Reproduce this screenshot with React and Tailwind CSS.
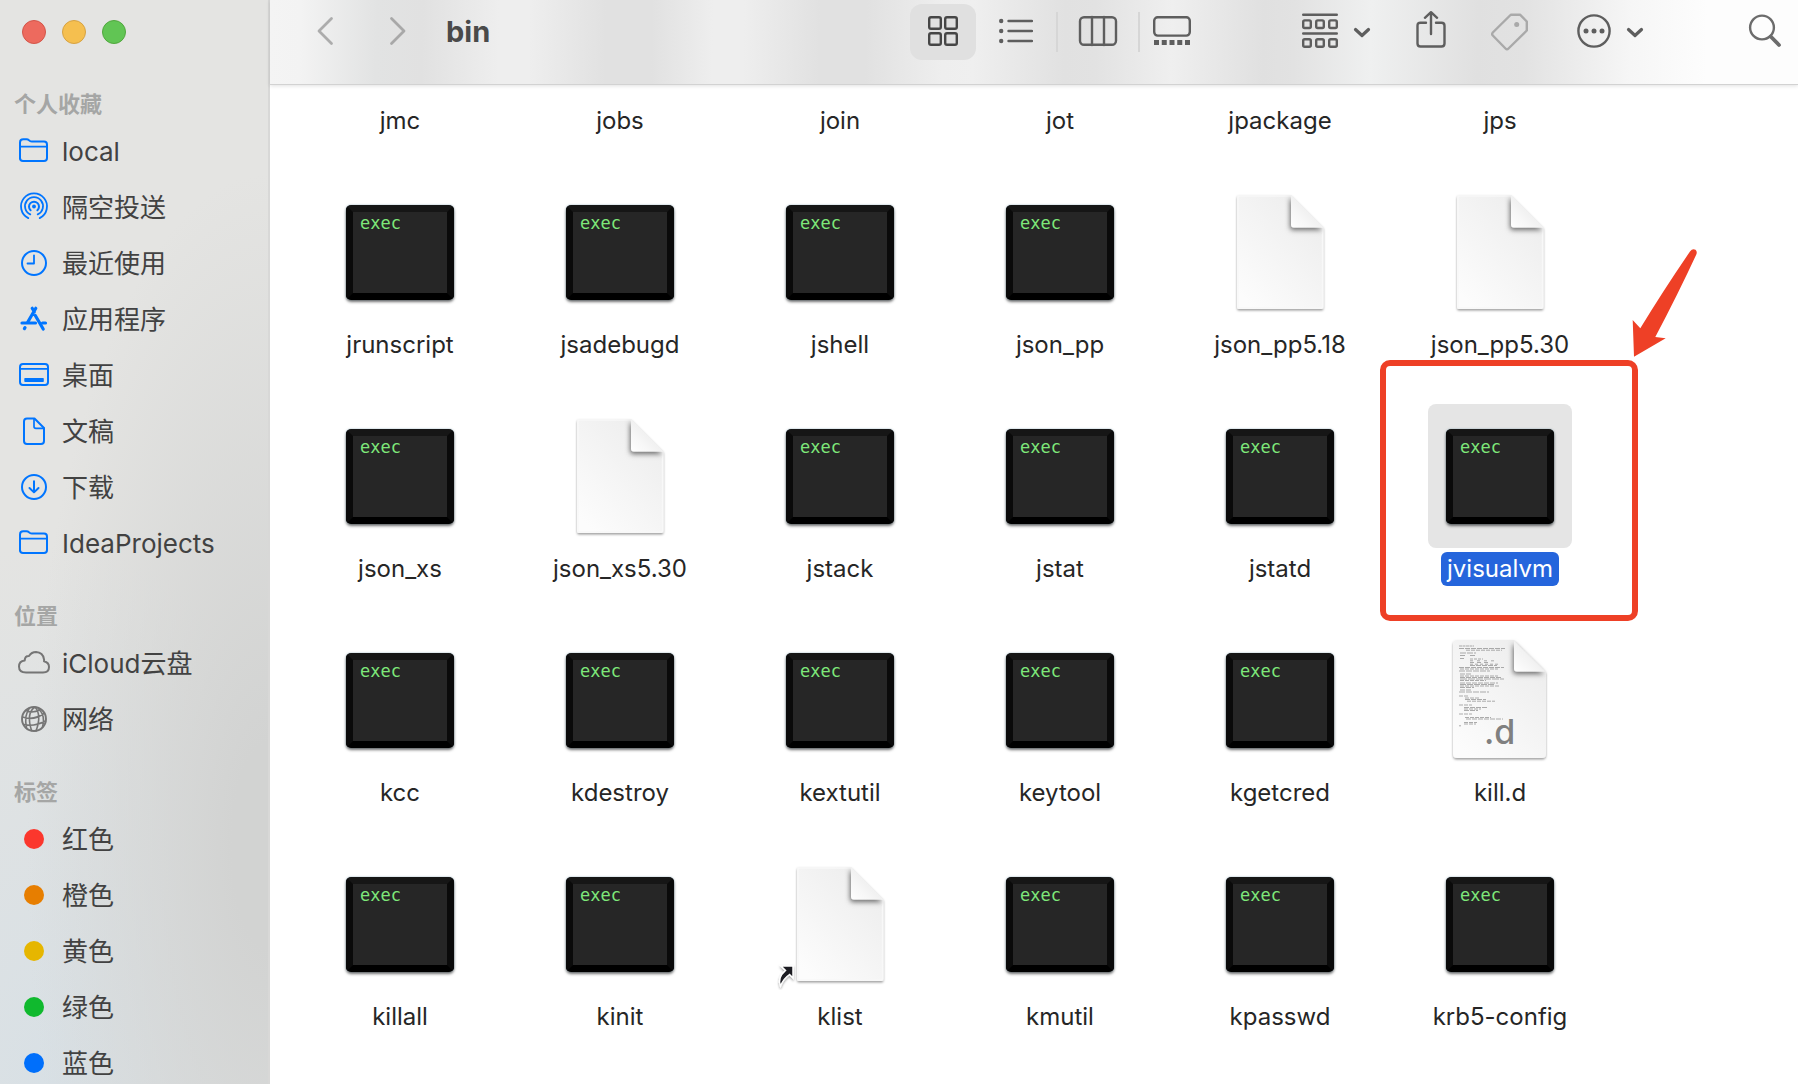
import React, { useState } from "react";

const favorites = [
  { name: "local", icon: "folder" },
  { name: "隔空投送", icon: "airdrop" },
  { name: "最近使用", icon: "clock" },
  { name: "应用程序", icon: "apps" },
  { name: "桌面", icon: "desktop" },
  { name: "文稿", icon: "doc" },
  { name: "下载", icon: "download" },
  { name: "IdeaProjects", icon: "folder" },
];

const locations = [
  { name: "iCloud云盘", icon: "cloud" },
  { name: "网络", icon: "globe" },
];

const tags = [
  { name: "红色", color: "bg-[#fb372d]" },
  { name: "橙色", color: "bg-[#e77e00]" },
  { name: "黄色", color: "bg-[#e6b600]" },
  { name: "绿色", color: "bg-[#10b92e]" },
  { name: "蓝色", color: "bg-[#006ffb]" },
];

// the first row is scrolled under the toolbar, only its names show
const scrolledRow = ["jmc", "jobs", "join", "jot", "jpackage", "jps"];

const files = [
  { name: "jrunscript", kind: "exec" },
  { name: "jsadebugd", kind: "exec" },
  { name: "jshell", kind: "exec" },
  { name: "json_pp", kind: "exec" },
  { name: "json_pp5.18", kind: "blank" },
  { name: "json_pp5.30", kind: "blank" },
  { name: "json_xs", kind: "exec" },
  { name: "json_xs5.30", kind: "blank" },
  { name: "jstack", kind: "exec" },
  { name: "jstat", kind: "exec" },
  { name: "jstatd", kind: "exec" },
  { name: "jvisualvm", kind: "exec", marked: true },
  { name: "kcc", kind: "exec" },
  { name: "kdestroy", kind: "exec" },
  { name: "kextutil", kind: "exec" },
  { name: "keytool", kind: "exec" },
  { name: "kgetcred", kind: "exec" },
  { name: "kill.d", kind: "source" },
  { name: "killall", kind: "exec" },
  { name: "kinit", kind: "exec" },
  { name: "klist", kind: "alias" },
  { name: "kmutil", kind: "exec" },
  { name: "kpasswd", kind: "exec" },
  { name: "krb5-config", kind: "exec" },
];

const sideIcons = {
  folder: (
    <>
      <path d="M4 26V9.500Q4 6.300 7.300 6.300H10.500Q12 6.300 13 7.200L14 8Q14.800 8.600 16 8.600H28Q31 8.600 31 11.800V25Q31 28 28 28H7Q4 28 4 25Z" />
      <path d="M4 13.600H31" strokeWidth="1.700" />
    </>
  ),
  airdrop: (
    <>
      <circle cx="18" cy="17.500" r="1.900" fill="currentColor" stroke="none" />
      <path d="M14.600 21.300A5 5 0 1 1 21.400 21.300" />
      <path d="M14.300 25.400A9 9 0 1 1 21.700 25.400" strokeWidth="1.800" />
      <path d="M12.300 29.100A13 13 0 1 1 23.700 29.100" strokeWidth="1.800" />
    </>
  ),
  clock: (
    <>
      <circle cx="18" cy="18" r="12" />
      <path d="M18 10.300V18.500H11.500" strokeWidth="1.800" />
    </>
  ),
  apps: (
    <g strokeWidth="3.200">
      <path d="M6 22H19.500M26.500 22H29.500" />
      <path d="M19.800 7.300L11.800 21M16.200 7.300L18.300 10.800M19.300 14.500L27.200 28" />
      <path d="M9 26.600L8.400 27.600" />
    </g>
  ),
  desktop: (
    <>
      <rect x="4" y="7" width="28" height="21" rx="3" />
      <path d="M4 11.800H32" strokeWidth="1.700" />
      <rect x="8.300" y="21" width="19.500" height="4" rx="0.700" fill="currentColor" stroke="none" />
    </>
  ),
  doc: (
    <>
      <path d="M18.500 5.500H11Q8 5.500 8 8.500V28Q8 31 11 31H25Q28 31 28 28V15Z" />
      <path d="M18 6V13.500Q18 15.300 20 15.300H28" strokeWidth="1.700" />
    </>
  ),
  download: (
    <>
      <circle cx="18" cy="18" r="12" />
      <path d="M18 12.300V23.200M13.500 19L18 23.400L22.500 19" />
    </>
  ),
  cloud: (
    <path d="M10 27.500Q3 27.500 3 21.500Q3 16 8.700 15.400Q9 10.800 13 11Q15.500 7 20 7Q27 7.300 28 14.300Q28.300 15.300 28 16.300Q33 17.500 33 22Q33 27.500 27 27.500Z" />
  ),
  globe: (
    <g strokeWidth="1.600">
      <circle cx="18" cy="18" r="12" strokeWidth="1.900" />
      <path d="M19 6Q10 12 15.500 29.500M19 6Q26 14 20 30M6.500 16Q18 20 28.500 12M8 23.500Q18 26 29.500 20M10 9.500Q16 13 24.500 8.500M13.500 7Q8 14 10.500 26.500M22 7Q30 15 26.500 26" />
    </g>
  ),
};

const SideIcon = ({ name }) => {
  const gray = name === "cloud" || name === "globe";
  return (
    <svg
      viewBox="0 0 36 36"
      className={gray ? "h-9 w-9 text-[#757575]" : "h-9 w-9 text-[#0075ff]"}
      fill="none"
      stroke="currentColor"
      strokeWidth="2"
      strokeLinecap="round"
      strokeLinejoin="round"
      aria-hidden="true"
    >
      {sideIcons[name]}
    </svg>
  );
};

const Section = ({ title, className, children }) => (
  <section className={className}>
    <h2 className="flex h-[38px] items-center px-3.5 text-[22px] font-bold text-[#a5a6a5]">
      {title}
    </h2>
    <ul>{children}</ul>
  </section>
);

const SideItem = ({ name, children }) => (
  <li>
    <a href="#" className="flex h-14 items-center gap-2.5 pl-4 text-[26px] text-[#424242]">
      <span className="flex h-9 w-9 items-center justify-center">{children}</span>
      {name}
    </a>
  </li>
);

const Sidebar = () => (
  <nav className="w-[270px] shrink-0 overflow-hidden border-r-2 border-[#d8d8d7] bg-[#e4e4e2] bg-[radial-gradient(ellipse_90%_62%_at_100%_78%,#d2d3d2_15%,transparent),radial-gradient(ellipse_120%_50%_at_20%_100%,#d8e0e5,transparent)]">
    <div className="flex h-[85px] gap-4 pt-5 pl-[22px]">
      <button aria-label="关闭" className="h-6 w-6 rounded-full border border-[#d35549] bg-[#ed6a5e]" />
      <button aria-label="最小化" className="h-6 w-6 rounded-full border border-[#d6a243] bg-[#f5bf4f]" />
      <button aria-label="缩放" className="h-6 w-6 rounded-full border border-[#51a73e] bg-[#61c554]" />
    </div>
    <Section title="个人收藏">
      {favorites.map((f) => (
        <SideItem key={f.name} name={f.name}>
          <SideIcon name={f.icon} />
        </SideItem>
      ))}
    </Section>
    <Section title="位置" className="mt-[26px]">
      {locations.map((l) => (
        <SideItem key={l.name} name={l.name}>
          <SideIcon name={l.icon} />
        </SideItem>
      ))}
    </Section>
    <Section title="标签" className="mt-[26px]">
      {tags.map((t) => (
        <SideItem key={t.name} name={t.name}>
          <span className={`h-5 w-5 rounded-full ${t.color}`} />
        </SideItem>
      ))}
    </Section>
  </nav>
);

const ToolIcon = ({ box, className, children }) => (
  <svg
    viewBox={box}
    className={className}
    fill="none"
    stroke="currentColor"
    strokeWidth="2.400"
    strokeLinecap="round"
    strokeLinejoin="round"
    aria-hidden="true"
  >
    {children}
  </svg>
);

const Chevron = () => (
  <ToolIcon box="0 0 18 56" className="h-14 w-[18px]">
    <path d="M2.500 25.500L9 31.500L15.500 25.500" strokeWidth="3.200" />
  </ToolIcon>
);

const Toolbar = () => (
  <header className="relative flex h-[85px] shrink-0 items-start border-b border-[#d2d2d2] bg-[linear-gradient(91deg,#f4f4f4_0%,#f3f3f3_2%,#e2e3e3_7%,#e1e1e1_10%,#eeeeee_15%,#eeeeee_17%,#e1e1e1_22%,#e1e1e1_25%,#eeeeee_29%,#eeeeee_31%,#e1e1e1_36%,#e1e1e1_39%,#eeeeee_44%,#efefef_46%,#e1e1e1_52%,#e2e2e2_54%,#efefef_59%,#e0e0e0_65%,#e2e2e2_67%,#eff0f0_72%,#e0e0e0_79%,#e2e2e2_82%,#f6f6f6_89%,#fdfdfd_94%)] pt-1 pr-4 pl-[45px] text-[#5e5e5e] shadow-[0_1px_4px_rgba(0,0,0,0.12)]">
    <button aria-label="后退" className="h-14 w-5 text-[#acacac]">
      <ToolIcon box="0 0 20 56" className="h-14 w-5">
        <path d="M16.500 14.500L4 27L16.500 39.500" strokeWidth="2.800" />
      </ToolIcon>
    </button>
    <button aria-label="前进" className="ml-[53px] h-14 w-5 text-[#a8a8a8]">
      <ToolIcon box="0 0 20 56" className="h-14 w-5">
        <path d="M3.500 14.500L16 27L3.500 39.500" strokeWidth="2.800" />
      </ToolIcon>
    </button>
    <h1 className="ml-[38px] flex h-14 items-center text-[29px] font-bold text-[#4a4a4a]">bin</h1>

    <div className="ml-auto flex items-center gap-[7px]">
      <button aria-label="图标" className="flex h-14 w-[66px] justify-center rounded-xl bg-[#e0e0e0] text-[#464646]">
        <ToolIcon box="0 0 34 56" className="h-14 w-[34px]">
          <rect x="3.200" y="13.200" width="11.600" height="11.600" rx="1.800" />
          <rect x="19.200" y="13.200" width="11.600" height="11.600" rx="1.800" />
          <rect x="3.200" y="29.200" width="11.600" height="11.600" rx="1.800" />
          <rect x="19.200" y="29.200" width="11.600" height="11.600" rx="1.800" />
        </ToolIcon>
      </button>
      <button aria-label="列表" className="flex h-14 w-[66px] justify-center">
        <ToolIcon box="0 0 34 56" className="h-14 w-[34px]">
          <path d="M9.500 17H33M9.500 27H33M9.500 37H33" />
          <g fill="currentColor" stroke="none">
            <circle cx="2.200" cy="17" r="2.200" />
            <circle cx="2.200" cy="27" r="2.200" />
            <circle cx="2.200" cy="37" r="2.200" />
          </g>
        </ToolIcon>
      </button>
      <span className="h-10 w-0.5 bg-[#d6d6d6]" />
      <button aria-label="分栏" className="flex h-14 w-[66px] justify-center">
        <ToolIcon box="0 0 40 56" className="h-14 w-10">
          <rect x="2" y="13.200" width="36" height="27.600" rx="4" />
          <path d="M14 13V41M26 13V41" />
        </ToolIcon>
      </button>
      <span className="h-10 w-0.5 bg-[#d6d6d6]" />
      <button aria-label="画廊" className="flex h-14 w-[50px] justify-center">
        <ToolIcon box="0 0 40 56" className="h-14 w-10">
          <rect x="2.200" y="13.200" width="35.600" height="18.400" rx="3.500" />
          <path d="M2 38.500H38" strokeWidth="5" strokeLinecap="butt" strokeDasharray="5 2.750" />
        </ToolIcon>
      </button>
    </div>

    <button aria-label="分组" className="ml-[104px] flex h-14 gap-3.5">
      <ToolIcon box="0 0 38 56" className="h-14 w-[38px]">
        <path d="M2.200 10.700H35.800M2.200 29.500H35.800" />
        <rect x="2.200" y="16.400" width="7.600" height="7.600" rx="1.500" />
        <rect x="15.200" y="16.400" width="7.600" height="7.600" rx="1.500" />
        <rect x="28.200" y="16.400" width="7.600" height="7.600" rx="1.500" />
        <rect x="2.200" y="35.200" width="7.600" height="7.600" rx="1.500" />
        <rect x="15.200" y="35.200" width="7.600" height="7.600" rx="1.500" />
        <rect x="28.200" y="35.200" width="7.600" height="7.600" rx="1.500" />
      </ToolIcon>
      <Chevron />
    </button>
    <button aria-label="共享" className="ml-11 h-14">
      <ToolIcon box="0 0 32 56" className="h-14 w-8">
        <path d="M11 18.700H5.500Q2.500 18.700 2.500 21.700V39.500Q2.500 42.500 5.500 42.500H26.500Q29.500 42.500 29.500 39.500V21.700Q29.500 18.700 26.500 18.700H21" />
        <path d="M16 30V8.500M9.900 13.800L16 8.200L22.100 13.800" />
      </ToolIcon>
    </button>
    <button aria-label="标签" className="ml-[43px] h-14 text-[#a9a9a9]">
      <ToolIcon box="0 0 40 56" className="h-14 w-10">
        <path d="M21.500 10.700H30L36.800 17.500V26.500L18.500 44.500Q17 46 15.500 44.500L2.800 31.500Q1.500 30 2.800 28.500L20 11.500Q20.700 10.700 21.500 10.700Z" />
        <circle cx="26.700" cy="20.500" r="2.500" fill="currentColor" stroke="none" />
      </ToolIcon>
    </button>
    <button aria-label="操作" className="ml-[46px] flex h-14 gap-3.5">
      <ToolIcon box="0 0 36 56" className="h-14 w-9">
        <circle cx="18" cy="27" r="15.600" />
        <g fill="currentColor" stroke="none">
          <circle cx="10" cy="27" r="2.500" />
          <circle cx="18" cy="27" r="2.500" />
          <circle cx="26" cy="27" r="2.500" />
        </g>
      </ToolIcon>
      <Chevron />
    </button>
    <button aria-label="搜索" className="ml-[104px] h-14 text-[#6c6c6c]">
      <ToolIcon box="0 0 34 56" className="h-14 w-[34px]">
        <circle cx="14" cy="23.500" r="11.900" />
        <path d="M22.700 32.500L31 41" strokeWidth="3.800" />
      </ToolIcon>
    </button>
  </header>
);

const ExecIcon = () => (
  <div className="h-[95px] w-[108px] rounded-[5px] border-[7px] border-x-[#0a0a0a] border-t-[#161616] border-b-black bg-[#262626] px-[7px] text-left font-['DejaVu_Sans_Mono',monospace] text-[17px] leading-[22px] text-[#7ee87a] shadow-[0_2px_3px_rgba(0,0,0,0.55),0_0_2px_rgba(100,150,170,0.6)]">
    exec
  </div>
);

const DocIcon = ({ alias }) => (
  <svg viewBox="0 0 144 144" className="h-36 w-36" aria-hidden="true">
    <defs>
      <linearGradient id="sheet" x1="1" y1="0" x2="0.200" y2="1">
        <stop offset="0" stopColor="#ebebeb" />
        <stop offset="1" stopColor="#fcfcfc" />
      </linearGradient>
      <linearGradient id="fold" x1="0" y1="1" x2="0.600" y2="0.400">
        <stop offset="0" stopColor="#ffffff" />
        <stop offset="1" stopColor="#eeeeee" />
      </linearGradient>
      <filter id="drop" x="-20%" y="-20%" width="140%" height="140%">
        <feDropShadow dx="0" dy="1.500" stdDeviation="1.100" floodOpacity="0.380" />
      </filter>
      <filter id="foldDrop" x="-50%" y="-50%" width="200%" height="200%">
        <feDropShadow dx="-1" dy="2.500" stdDeviation="2.800" floodOpacity="0.550" />
      </filter>
      <clipPath id="sheetClip">
        <path d="M31 15H83L115.500 47.500V127Q115.500 129 113.500 129H31Q29 129 29 127V17Q29 15 31 15Z" />
      </clipPath>
    </defs>
    <path
      d="M31 15H83L115.500 47.500V127Q115.500 129 113.500 129H31Q29 129 29 127V17Q29 15 31 15Z"
      fill="url(#sheet)"
      filter="url(#drop)"
    />
    <path
      d="M31 16H82.500L114.500 48V126.500Q114.500 128 113 128H31.500Q30 128 30 126.500V16Z"
      fill="none"
      stroke="#f8f8f8"
      strokeWidth="1.500"
    />
    <g clipPath="url(#sheetClip)">
      <path d="M83 15L115.500 47.500H86Q83 47.500 83 44.500Z" fill="url(#fold)" filter="url(#foldDrop)" />
    </g>
    {alias && (
      <path
        d="M13 114H25V126L21.500 122.500Q15.500 126.500 12.500 134Q9 126 17.500 118.500Z"
        fill="#1c1d21"
        stroke="#ffffff"
        strokeWidth="1.500"
        filter="url(#drop)"
      />
    )}
  </svg>
);

// [x, y, length, dash pattern] of the miniature source lines
const codeLines = [
  [31, 18, 15, "3 0.5"], [31, 20.5, 46, "5 1"], [38, 22.200, 36, "4 1"], [32, 25, 16, "6 1"],
  [32, 27.500, 15, "5 5"], [32, 30.500, 5, "4 1"], [42, 31, 13, "3 1"], [42, 32.800, 24, "3 4"],
  [42, 34.500, 21, "4 3"], [42, 36.200, 30, "3 2"], [42, 37.500, 27, "5 1"], [31, 39.500, 45, "5 1"],
  [32, 41, 38, "4 1"], [31, 43, 31, "6 1"], [32, 46, 12, "5 1"], [32, 48, 38, "4 1"],
  [32, 49.500, 42, "5 1"], [32, 51, 44, "7 1"], [32, 52.500, 26, "4 1"], [32, 55, 38, "5 1"],
  [32, 56.500, 35, "6 1"], [32, 58, 40, "4 1"], [32, 59.500, 14, "5 1"], [32, 62, 12, "5 1"],
  [31, 64, 30, "6 1"], [31, 68, 9, "4 1"], [37, 70, 14, "4 1"], [37, 71.500, 21, "5 1"],
  [39, 73.200, 28, "4 1"], [31, 77, 13, "4 1"], [36, 79.500, 24, "5 1"], [36, 81, 17, "4 1"],
  [36, 82.500, 14, "5 1"], [31, 86, 13, "4 1"], [37, 89.500, 26, "4 1"], [38, 91, 37, "5 1"],
  [36, 94.500, 13, "4 1"], [36, 96, 12, "4 1"], [31, 97.800, 2, "2 1"],
];

const SourceIcon = () => (
  <svg viewBox="0 0 144 144" className="h-36 w-36" role="img" aria-label=".d">
    <path
      d="M29 12H86L118 44V126Q118 130 114 130H29Q25 130 25 126V16Q25 12 29 12Z"
      fill="url(#sheet)"
      filter="url(#drop)"
    />
    <g stroke="#8a8a8a" strokeWidth="0.700">
      {codeLines.map(([x, y, len, dash]) => (
        <path key={y} d={`M${x} ${y}h${len}`} strokeDasharray={dash} />
      ))}
    </g>
    <path d="M86 13L117 43.500H89Q86 43.500 86 40.500Z" fill="url(#fold)" filter="url(#foldDrop)" />
    <text x="56" y="116" fontSize="34" fontWeight="500" fill="#808080">.d</text>
  </svg>
);

const FileIcon = ({ kind }) => {
  if (kind === "exec") return <ExecIcon />;
  if (kind === "source") return <SourceIcon />;
  return <DocIcon alias={kind === "alias"} />;
};

const Marker = () => (
  <>
    <span className="pointer-events-none absolute -top-11 -left-2.5 h-[261px] w-[258px] rounded-[10px] border-[6px] border-[#ee4026]" />
    <svg viewBox="0 0 70 114" className="pointer-events-none absolute -top-[158px] left-60 h-[114px] w-[70px]" aria-hidden="true">
      <path
        d="M4 110.700L2.700 74L10.300 82.300Q33 45 60 5.500Q62.500 2.200 65.500 3.800Q67.500 5.500 66.300 8.500Q48 48 25.300 91L35.700 92.300Z"
        fill="#ee4026"
      />
    </svg>
  </>
);

export default function App() {
  const [selected, setSelected] = useState("jvisualvm");

  return (
    <div className="flex h-screen overflow-hidden bg-white font-[Inter,'Noto_Sans_CJK_SC',sans-serif]">
      <Sidebar />
      <div className="flex min-w-0 flex-1 flex-col">
        <Toolbar />
        <main className="grid flex-1 grid-cols-[repeat(auto-fill,220px)] content-start overflow-hidden pt-[19px] pl-5 text-[24px] text-[#262626]">
          {scrolledRow.map((name) => (
            <div key={name} className="mb-[42px] text-center leading-[34px]">
              {name}
            </div>
          ))}
          {files.map((f) => {
            const active = f.name === selected;
            return (
              <div key={f.name} className="relative mb-[42px]">
                <button
                  onClick={() => setSelected(f.name)}
                  className="flex w-full flex-col items-center gap-1"
                >
                  <span
                    className={`flex h-36 w-36 items-center justify-center rounded-lg ${active ? "bg-[#e5e5e5]" : ""}`}
                  >
                    <FileIcon kind={f.kind} />
                  </span>
                  <span
                    className={`rounded-md px-1.5 leading-[34px] ${active ? "bg-[#2565dc] text-white" : ""}`}
                  >
                    {f.name}
                  </span>
                </button>
                {f.marked && <Marker />}
              </div>
            );
          })}
        </main>
      </div>
    </div>
  );
}
